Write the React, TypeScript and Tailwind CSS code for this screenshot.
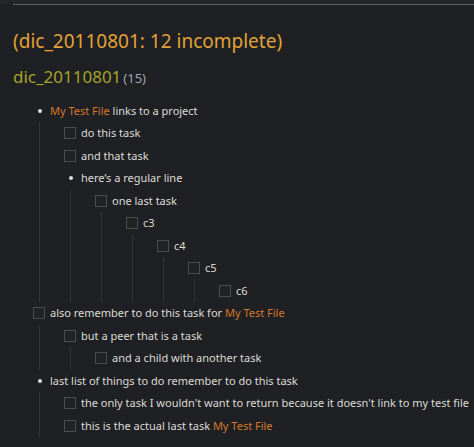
import React from "react";

type Item = {
  kind: "bullet" | "task";
  content: React.ReactNode;
  children?: Item[];
};

const Link = ({ children }: { children: React.ReactNode }) => (
  <span className="text-[#d9782d]">{children}</span>
);

const data: Item[] = [
  {
    kind: "bullet",
    content: (
      <>
        <Link>My Test File</Link> links to a project
      </>
    ),
    children: [
      { kind: "task", content: "do this task" },
      { kind: "task", content: "and that task" },
      {
        kind: "bullet",
        content: "here’s a regular line",
        children: [
          {
            kind: "task",
            content: "one last task",
            children: [
              {
                kind: "task",
                content: "c3",
                children: [
                  {
                    kind: "task",
                    content: "c4",
                    children: [
                      {
                        kind: "task",
                        content: "c5",
                        children: [{ kind: "task", content: "c6" }],
                      },
                    ],
                  },
                ],
              },
            ],
          },
        ],
      },
    ],
  },
  {
    kind: "task",
    content: (
      <>
        also remember to do this task for <Link>My Test File</Link>
      </>
    ),
    children: [
      {
        kind: "task",
        content: "but a peer that is a task",
        children: [{ kind: "task", content: "and a child with another task" }],
      },
    ],
  },
  {
    kind: "bullet",
    content: "last list of things to do remember to do this task",
    children: [
      {
        kind: "task",
        content:
          "the only task I wouldn't want to return because it doesn't link to my test file",
      },
      {
        kind: "task",
        content: (
          <>
            this is the actual last task <Link>My Test File</Link>
          </>
        ),
      },
    ],
  },
];

function Node({ item }: { item: Item }) {
  return (
    <li>
      <div className="flex items-center h-[22.5px] -ml-[17px] whitespace-nowrap">
        <span className="w-[17px] shrink-0 flex items-center">
          {item.kind === "bullet" ? (
            <span className="ml-[5px] w-[4px] h-[4px] rounded-full bg-[#dcddde]" />
          ) : (
            <span className="w-[12px] h-[12px] border border-[#4a4d50] bg-[#202225]" />
          )}
        </span>
        <span>{item.content}</span>
      </div>
      {item.children && (
        <ul className="-ml-[11px] pl-[41px] border-l border-[#34373a]">
          {item.children.map((c, i) => (
            <Node key={i} item={c} />
          ))}
        </ul>
      )}
    </li>
  );
}

export default function App() {
  return (
    <div
      className="w-[474px] h-[447px] overflow-hidden bg-[#1e2023] text-[#dddcd8]"
      style={{ fontFamily: '"Noto Sans", "Open Sans", sans-serif' }}
    >
      <div className="h-[4px] bg-[#242629]" />
      <div className="ml-[13px] h-[1px] bg-[#5c5f62]" />
      <div className="pl-[13px] pt-[23px]">
        <div className="text-[19px] leading-[26px] text-[#e3a236]">
          (dic_20110801: 12 incomplete)
        </div>
        <div className="mt-[12px] flex items-baseline">
          <span className="text-[17px] leading-[22px] text-[#a6a32b]">
            dic_20110801
          </span>
          <span className="ml-[2px] text-[13px] text-[#a3a5a8]">(15)</span>
        </div>
      </div>
      <ul className="pl-[50px] mt-[11px] text-[11px]">
        {data.map((item, i) => (
          <Node key={i} item={item} />
        ))}
      </ul>
    </div>
  );
}
